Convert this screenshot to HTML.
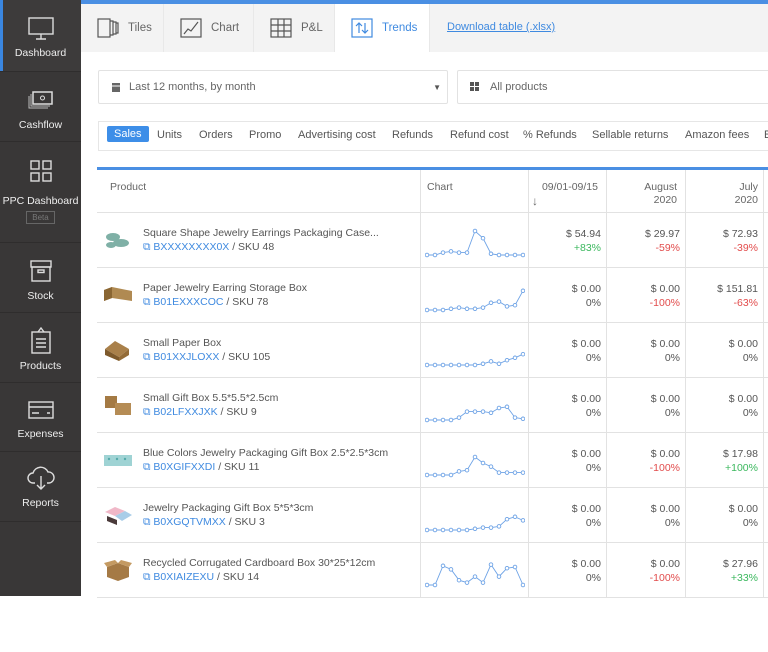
<!DOCTYPE html>
<html><head><meta charset="utf-8"><style>
*{box-sizing:border-box;margin:0;padding:0}
body{width:768px;height:596px;overflow:hidden;background:#fff;font-family:"Liberation Sans",sans-serif;position:relative;color:#555}
.sb{position:absolute;left:0;top:0;width:81px;height:596px;background:#393737}
.it{position:absolute;left:0;width:81px;border-bottom:1px solid #2f2d2d;color:#eee;font-size:10.5px;text-align:center}
.it svg{display:block;margin:0 auto}
.act{background:#3d3b3b}
.act:before{content:"";position:absolute;left:0;top:0;width:3px;height:100%;background:#3a86e0}
.topline{position:absolute;left:81px;top:0;right:0;height:4px;background:#4a8fe3}
.tabs{position:absolute;left:81px;top:4px;right:0;height:48px;background:#f3f3f3}
.tab{position:absolute;top:0;height:48px;border-right:1px solid #e8e8e8;font-size:11.5px;color:#666;display:flex;align-items:center;padding-left:16px}
.tab svg{margin-right:9px}
.dd{position:absolute;top:70px;height:34px;border:1px solid #e2e2e2;border-radius:2px;font-size:11px;color:#666;display:flex;align-items:center;padding-left:12px;background:#fff}
.mrow{position:absolute;left:98px;top:121px;right:0;height:30px;border:1px solid #e6e6e6;border-right:none;font-size:11px;color:#555}
.mrow span{position:absolute;top:7px}
.sales{background:#3d8ee8;color:#fff;border-radius:2px;padding:2px 7px;top:4px!important}
.tbl{position:absolute;left:97px;top:167px;width:680px;border-top:3px solid #4a8fe3}
.hr{position:absolute;top:0;height:42px;border-right:1px solid #e2e2e2;font-size:10.5px;color:#666}
.row{position:absolute;left:0;width:680px;height:55px;border-top:1px solid #e2e2e2}
.c{position:absolute;top:0;height:54px;border-right:1px solid #e2e2e2}
.nm{position:absolute;left:46px;top:14px;font-size:10.5px;color:#555;white-space:nowrap}
.sku{position:absolute;left:46px;top:28px;font-size:10.5px;color:#555;white-space:nowrap}
.sku b{font-weight:normal;color:#3f8ae0}
.v{position:absolute;right:5px;top:14px;font-size:10.5px;text-align:right;line-height:14px;color:#555}
.g{color:#3bb85e}.r{color:#e24c4c}
.img{position:absolute;left:6px;top:16px;width:30px;height:22px}
</style></head><body>
<div class="sb">
<div class="it act" style="top:0;height:72px"><svg width="28" height="26" viewBox="0 0 28 26" style="margin-top:16px"><rect x="2" y="2" width="24" height="16" fill="none" stroke="#ddd" stroke-width="1.4"/><path d="M14 18v5M9 23h10" stroke="#ddd" stroke-width="1.4"/></svg><div style="margin-top:5px">Dashboard</div></div>
<div class="it" style="top:72px;height:70px"><svg width="28" height="22" viewBox="0 0 28 22" style="margin-top:17px"><rect x="6" y="3" width="19" height="12" fill="none" stroke="#ddd" stroke-width="1.5"/><path d="M4 5v12h19M2 7v12h19" stroke="#bbb" fill="none"/><circle cx="15.5" cy="9" r="2" fill="none" stroke="#ddd"/></svg><div style="margin-top:8px">Cashflow</div></div>
<div class="it" style="top:142px;height:101px"><svg width="24" height="24" viewBox="0 0 24 24" style="margin-top:17px"><g fill="none" stroke="#ddd" stroke-width="1.4"><rect x="2" y="2" width="8" height="8"/><rect x="14" y="2" width="8" height="8"/><rect x="2" y="14" width="8" height="8"/><rect x="14" y="14" width="8" height="8"/></g></svg><div style="margin-top:12px">PPC Dashboard</div><div style="margin:4px auto 0;width:29px;height:13px;border:1px solid #666;color:#777;font-size:8px;line-height:11px">Beta</div></div>
<div class="it" style="top:243px;height:70px"><svg width="24" height="24" viewBox="0 0 24 24" style="margin-top:16px"><g fill="none" stroke="#ddd" stroke-width="1.4"><rect x="2" y="2" width="20" height="6"/><rect x="3" y="8" width="18" height="14"/><rect x="9" y="11" width="6" height="2.5"/></g></svg><div style="margin-top:7px">Stock</div></div>
<div class="it" style="top:313px;height:70px"><svg width="24" height="28" viewBox="0 0 24 28" style="margin-top:14px"><g fill="none" stroke="#ddd" stroke-width="1.4"><rect x="3" y="5" width="18" height="21"/><path d="M9 5l3-4 3 4M7 12h10M7 16h10M7 20h10"/></g></svg><div style="margin-top:5px">Products</div></div>
<div class="it" style="top:383px;height:69px"><svg width="26" height="20" viewBox="0 0 26 20" style="margin-top:17px"><g fill="none" stroke="#ddd" stroke-width="1.4"><rect x="1" y="2" width="24" height="16"/><path d="M1 7h24M4 13h7M19 13h3"/></g></svg><div style="margin-top:8px">Expenses</div></div>
<div class="it" style="top:452px;height:70px"><svg width="30" height="26" viewBox="0 0 30 26" style="margin-top:13px"><path d="M9 18H7a5 5 0 0 1 0-10 8 8 0 0 1 15-1 5.5 5.5 0 0 1 1 11h-2M15 11v13M11 20l4 4 4-4" fill="none" stroke="#ddd" stroke-width="1.4"/></svg><div style="margin-top:6px">Reports</div></div>
</div>
<div class="topline"></div>
<div class="tabs">
<div class="tab" style="left:0;width:83px"><svg width="22" height="20" viewBox="0 0 22 20"><g fill="none" stroke="#555" stroke-width="1.2"><rect x="1" y="1" width="12" height="18"/><path d="M13 3h3v14h-3M16 4h3v12h-3M19 5h2v10h-2"/></g></svg>Tiles</div>
<div class="tab" style="left:83px;width:90px"><svg width="22" height="20" viewBox="0 0 22 20"><g fill="none" stroke="#555" stroke-width="1.2"><rect x="1" y="1" width="20" height="18"/><path d="M4 16l4-5 3 2 7-9"/></g></svg>Chart</div>
<div class="tab" style="left:173px;width:81px"><svg width="22" height="20" viewBox="0 0 22 20"><g fill="none" stroke="#555" stroke-width="1.2"><rect x="1" y="1" width="20" height="18"/><path d="M1 7h20M1 13h20M8 1v18M14 1v18"/></g></svg>P&amp;L</div>
<div class="tab" style="left:254px;width:95px;background:#fff;color:#3f8ae0"><svg width="22" height="20" viewBox="0 0 22 20"><g fill="none" stroke="#3f8ae0" stroke-width="1.2"><rect x="1" y="1" width="20" height="18"/><path d="M8 15V5M5 8l3-3 3 3M14 5v10M11 12l3 3 3-3"/></g></svg>Trends</div>
<div style="position:absolute;left:366px;top:17px;font-size:11px;color:#3f8ae0;text-decoration:underline">Download table (.xlsx)</div>
</div>
<div class="dd" style="left:98px;width:350px"><svg width="10" height="10" viewBox="0 0 10 10" style="margin-right:8px"><rect x="1" y="1" width="8" height="9" fill="#666"/><path d="M1 4h8" stroke="#fff"/></svg>Last 12 months, by month<span style="position:absolute;right:6px;top:12px;font-size:8px;color:#555">▼</span></div>
<div class="dd" style="left:457px;width:320px"><svg width="10" height="10" viewBox="0 0 10 10" style="margin-right:10px"><g fill="#555"><rect x="0" y="0" width="4" height="4"/><rect x="5" y="0" width="4" height="4"/><rect x="0" y="5" width="4" height="4"/><rect x="5" y="5" width="4" height="4"/></g></svg>All products</div>
<div class="mrow">
<span class="sales" style="left:8px">Sales</span><span style="left:58px">Units</span><span style="left:100px">Orders</span><span style="left:150px">Promo</span><span style="left:199px">Advertising cost</span><span style="left:293px">Refunds</span><span style="left:351px">Refund cost</span><span style="left:424px">% Refunds</span><span style="left:493px">Sellable returns</span><span style="left:586px">Amazon fees</span><span style="left:665px">E</span>
</div>
<svg width="0" height="0" style="position:absolute"><defs><marker id="m" markerWidth="6" markerHeight="6" refX="3" refY="3" markerUnits="userSpaceOnUse"><circle cx="3" cy="3" r="1.8" fill="#fff" stroke="#6ea3e6" stroke-width="0.9"/></marker></defs></svg>
<div class="tbl">
<div class="hr" style="left:0;width:324px"><span style="position:absolute;left:13px;top:11px">Product</span></div>
<div class="hr" style="left:324px;width:108px"><span style="position:absolute;left:6px;top:11px">Chart</span></div>
<div class="hr" style="left:432px;width:78px"><span style="position:absolute;right:8px;top:11px">09/01-09/15</span><span style="position:absolute;left:3px;top:24px;font-size:12px">↓</span></div>
<div class="hr" style="left:510px;width:79px;text-align:right"><span style="position:absolute;right:8px;top:11px;line-height:13px">August<br>2020</span></div>
<div class="hr" style="left:589px;width:78px;text-align:right"><span style="position:absolute;right:5px;top:11px;line-height:13px">July<br>2020</span></div>

<div class="row" style="top:42px"><div class="c" style="left:0;width:324px"><svg class="img" viewBox="0 0 30 22"><g fill="#7fb0a6"><ellipse cx="10" cy="8" rx="7" ry="4"/><ellipse cx="18" cy="14" rx="8" ry="4"/><ellipse cx="8" cy="16" rx="5" ry="3"/></g></svg><div class="nm">Square Shape Jewelry Earrings Packaging Case...</div><div class="sku"><b>⧉ BXXXXXXXX0X</b> / SKU 48</div></div><div class="c" style="left:324px;width:108px"><svg style="position:absolute;left:4px;top:12px" width="100" height="34"><polyline points="2,30 10,30 18,27.6 26,26.4 34,27.6 42,27.6 50,6 58,13.2 66,28.8 74,30 82,30 90,30 98,30" fill="none" stroke="#6ea3e6" stroke-width="0.9" marker-start="url(#m)" marker-mid="url(#m)" marker-end="url(#m)"/></svg></div><div class="c" style="left:432px;width:78px"><div class="v">$ 54.94<br><span class="g">+83%</span></div></div><div class="c" style="left:510px;width:79px"><div class="v">$ 29.97<br><span class="r">-59%</span></div></div><div class="c" style="left:589px;width:78px"><div class="v">$ 72.93<br><span class="r">-39%</span></div></div></div>

<div class="row" style="top:97px"><div class="c" style="left:0;width:324px"><svg class="img" viewBox="0 0 30 22"><path d="M1 6l8-3 20 4v10l-20-3-8 3z" fill="#b08a52"/><path d="M1 6l8-3v11l-8 3z" fill="#8a6633"/></svg><div class="nm">Paper Jewelry Earring Storage Box</div><div class="sku"><b>⧉ B01EXXXCOC</b> / SKU 78</div></div><div class="c" style="left:324px;width:108px"><svg style="position:absolute;left:4px;top:12px" width="100" height="34"><polyline points="2,30 10,30 18,30 26,28.8 34,27.6 42,28.8 50,28.8 58,27.6 66,22.8 74,21.6 82,26.4 90,25.2 98,10.8" fill="none" stroke="#6ea3e6" stroke-width="0.9" marker-start="url(#m)" marker-mid="url(#m)" marker-end="url(#m)"/></svg></div><div class="c" style="left:432px;width:78px"><div class="v">$ 0.00<br>0%</div></div><div class="c" style="left:510px;width:79px"><div class="v">$ 0.00<br><span class="r">-100%</span></div></div><div class="c" style="left:589px;width:78px"><div class="v">$ 151.81<br><span class="r">-63%</span></div></div></div>

<div class="row" style="top:152px"><div class="c" style="left:0;width:324px"><svg class="img" viewBox="0 0 30 22"><path d="M2 10l10-8 14 8-10 8z" fill="#a9804a"/><path d="M2 10v6l14 6v-4z" fill="#7e5a2c"/><path d="M16 18v4l10-6v-6z" fill="#946c38"/></svg><div class="nm">Small Paper Box</div><div class="sku"><b>⧉ B01XXJLOXX</b> / SKU 105</div></div><div class="c" style="left:324px;width:108px"><svg style="position:absolute;left:4px;top:12px" width="100" height="34"><polyline points="2,30 10,30 18,30 26,30 34,30 42,30 50,30 58,28.8 66,26.4 74,28.8 82,25.2 90,22.8 98,19.2" fill="none" stroke="#6ea3e6" stroke-width="0.9" marker-start="url(#m)" marker-mid="url(#m)" marker-end="url(#m)"/></svg></div><div class="c" style="left:432px;width:78px"><div class="v">$ 0.00<br>0%</div></div><div class="c" style="left:510px;width:79px"><div class="v">$ 0.00<br>0%</div></div><div class="c" style="left:589px;width:78px"><div class="v">$ 0.00<br>0%</div></div></div>

<div class="row" style="top:207px"><div class="c" style="left:0;width:324px"><svg class="img" viewBox="0 0 30 22"><rect x="2" y="2" width="12" height="12" fill="#a47a44"/><rect x="12" y="9" width="16" height="12" fill="#b58c55"/></svg><div class="nm">Small Gift Box 5.5*5.5*2.5cm</div><div class="sku"><b>⧉ B02LFXXJXK</b> / SKU 9</div></div><div class="c" style="left:324px;width:108px"><svg style="position:absolute;left:4px;top:12px" width="100" height="34"><polyline points="2,30 10,30 18,30 26,30 34,27.6 42,21.6 50,21.6 58,21.6 66,22.8 74,18 82,16.8 90,27.6 98,28.8" fill="none" stroke="#6ea3e6" stroke-width="0.9" marker-start="url(#m)" marker-mid="url(#m)" marker-end="url(#m)"/></svg></div><div class="c" style="left:432px;width:78px"><div class="v">$ 0.00<br>0%</div></div><div class="c" style="left:510px;width:79px"><div class="v">$ 0.00<br>0%</div></div><div class="c" style="left:589px;width:78px"><div class="v">$ 0.00<br>0%</div></div></div>

<div class="row" style="top:262px"><div class="c" style="left:0;width:324px"><svg class="img" viewBox="0 0 30 22"><rect x="1" y="6" width="28" height="11" fill="#9fd3d4"/><g fill="#5aa"><circle cx="6" cy="10" r="1.2"/><circle cx="14" cy="10" r="1.2"/><circle cx="22" cy="10" r="1.2"/></g></svg><div class="nm">Blue Colors Jewelry Packaging Gift Box 2.5*2.5*3cm</div><div class="sku"><b>⧉ B0XGIFXXDI</b> / SKU 11</div></div><div class="c" style="left:324px;width:108px"><svg style="position:absolute;left:4px;top:12px" width="100" height="34"><polyline points="2,30 10,30 18,30 26,30 34,26.4 42,25.2 50,12 58,18 66,21.6 74,27.6 82,27.6 90,27.6 98,27.6" fill="none" stroke="#6ea3e6" stroke-width="0.9" marker-start="url(#m)" marker-mid="url(#m)" marker-end="url(#m)"/></svg></div><div class="c" style="left:432px;width:78px"><div class="v">$ 0.00<br>0%</div></div><div class="c" style="left:510px;width:79px"><div class="v">$ 0.00<br><span class="r">-100%</span></div></div><div class="c" style="left:589px;width:78px"><div class="v">$ 17.98<br><span class="g">+100%</span></div></div></div>

<div class="row" style="top:317px"><div class="c" style="left:0;width:324px"><svg class="img" viewBox="0 0 30 22"><path d="M2 8l10-5 10 4-10 5z" fill="#f0b8c8"/><path d="M12 12l10-5 7 4-10 6z" fill="#a9cde8"/><path d="M4 12l10 4v5l-10-4z" fill="#4a3a3a"/></svg><div class="nm">Jewelry Packaging Gift Box 5*5*3cm</div><div class="sku"><b>⧉ B0XGQTVMXX</b> / SKU 3</div></div><div class="c" style="left:324px;width:108px"><svg style="position:absolute;left:4px;top:12px" width="100" height="34"><polyline points="2,30 10,30 18,30 26,30 34,30 42,30 50,28.8 58,27.6 66,27.6 74,26.4 82,19.2 90,16.8 98,20.4" fill="none" stroke="#6ea3e6" stroke-width="0.9" marker-start="url(#m)" marker-mid="url(#m)" marker-end="url(#m)"/></svg></div><div class="c" style="left:432px;width:78px"><div class="v">$ 0.00<br>0%</div></div><div class="c" style="left:510px;width:79px"><div class="v">$ 0.00<br>0%</div></div><div class="c" style="left:589px;width:78px"><div class="v">$ 0.00<br>0%</div></div></div>

<div class="row" style="top:372px"><div class="c" style="left:0;width:324px"><svg class="img" viewBox="0 0 30 22"><path d="M4 8l11-4 11 4v10l-11 4-11-4z" fill="#a57a45"/><path d="M4 8l-3-4 11-3 3 3zM26 8l3-4-11-3-3 3z" fill="#c49a62"/></svg><div class="nm">Recycled Corrugated Cardboard Box 30*25*12cm</div><div class="sku"><b>⧉ B0XIAIZEXU</b> / SKU 14</div></div><div class="c" style="left:324px;width:108px"><svg style="position:absolute;left:4px;top:12px" width="100" height="34"><polyline points="2,30 10,30 18,10.8 26,14.4 34,25.2 42,27.6 50,21.6 58,27.6 66,9.6 74,21.6 82,13.2 90,12 98,30" fill="none" stroke="#6ea3e6" stroke-width="0.9" marker-start="url(#m)" marker-mid="url(#m)" marker-end="url(#m)"/></svg></div><div class="c" style="left:432px;width:78px"><div class="v">$ 0.00<br>0%</div></div><div class="c" style="left:510px;width:79px"><div class="v">$ 0.00<br><span class="r">-100%</span></div></div><div class="c" style="left:589px;width:78px"><div class="v">$ 27.96<br><span class="g">+33%</span></div></div></div>
<div class="row" style="top:427px"></div>
</div>
</body></html>
